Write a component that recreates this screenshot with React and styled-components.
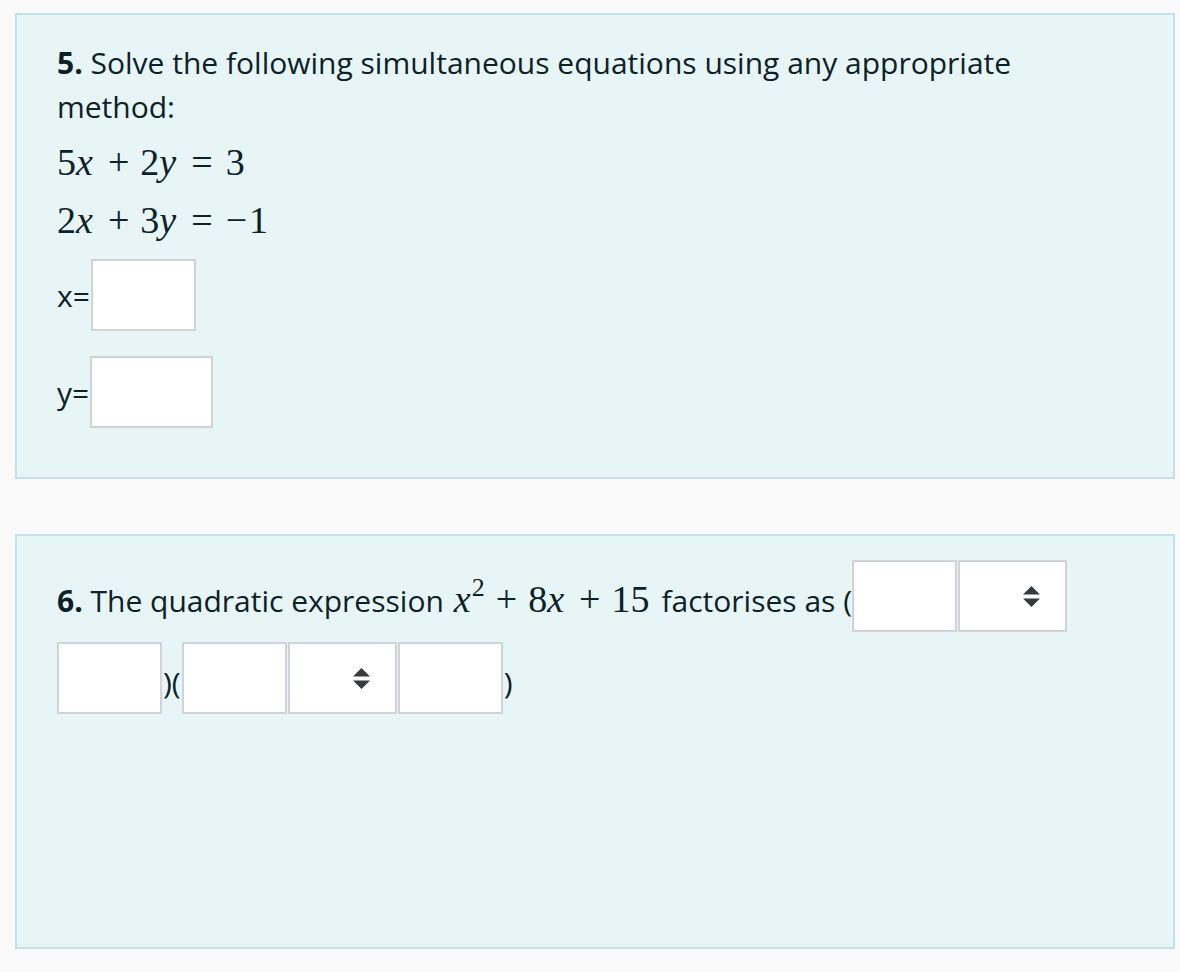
import React from "react";
import styled, { createGlobalStyle } from "styled-components";

const GlobalStyle = createGlobalStyle`
  html, body {
    margin: 0;
    padding: 0;
    background: #fafafa;
  }
  body {
    font-family: "Open Sans", "Liberation Sans", sans-serif;
    color: #0c2226;
  }
`;

const Page = styled.div`
  padding: 13px 5px 20px 15px;
  display: flex;
  flex-direction: column;
  gap: 55px;
`;

const Card = styled.div`
  box-sizing: border-box;
  height: ${(p) => p.$height}px;
  background: #e7f5f7;
  border: 2px solid #bee3eb;
  padding: ${(p) => p.$padTop}px 60px 0 40px;
`;

const QuestionText = styled.p`
  margin: 0;
  font-size: 30px;
  line-height: 44px;
`;

const Num = styled.b`
  font-weight: 700;
`;

const Equations = styled.div`
  margin-top: 4px;
  display: flex;
  flex-direction: column;
`;

const EqLine = styled.div`
  font-family: "Liberation Serif", "Times New Roman", serif;
  font-size: 38px;
  line-height: 58px;
  white-space: nowrap;
`;

const V = styled.i`
  font-style: italic;
  margin-right: ${(p) => p.$r || 2}px;
`;

const Op = styled.span`
  margin: 0 ${(p) => p.$gap || 11}px;
`;

const Minus = styled.span`
  margin-right: 2px;
`;

const Answers = styled.div`
  margin-top: 10px;
  display: flex;
  flex-direction: column;
  gap: 25px;
`;

const AnswerRow = styled.label`
  display: flex;
  align-items: center;
  font-size: 30px;
`;

const Label = styled.span`
  margin-top: 1px;
  margin-right: 1px;
`;

const Input = styled.input`
  box-sizing: border-box;
  width: ${(p) => p.$w || 105}px;
  height: 72px;
  border: 2px solid #ced4da;
  background: #fff;
  border-radius: 0;
  margin: 0;
  padding: 0 10px;
  font-size: 28px;
  outline: none;
`;

const SelectBox = styled.div`
  box-sizing: border-box;
  width: 109px;
  height: 72px;
  border: 2px solid #ced4da;
  background: #fff;
  display: flex;
  align-items: center;
  justify-content: flex-end;
  padding-right: 25px;
`;

const Line = styled.div`
  display: flex;
  align-items: center;
  font-size: 30px;
  white-space: nowrap;
  margin-bottom: ${(p) => p.$mb || 0}px;
`;

const TextPart = styled.span`
  margin-top: 8px;
`;

const MathInline = styled.span`
  font-family: "Liberation Serif", "Times New Roman", serif;
  font-size: 38px;
  margin: 6px 12px 0 10px;
`;

const Sup = styled.sup`
  font-size: 26px;
  vertical-align: 0;
  position: relative;
  top: -16px;
  margin-left: -1px;
`;

const Paren = styled.span`
  margin: 8px 1px 0;
`;

const Gap = styled.span`
  width: ${(p) => p.$w}px;
`;

const Arrows = () => (
  <svg width="17" height="21" viewBox="0 0 17 21">
    <path d="M8.5 0 L17 8.5 L0 8.5 Z" fill="#343a40" />
    <path d="M0 12.5 L17 12.5 L8.5 21 Z" fill="#343a40" />
  </svg>
);

const Select = () => (
  <SelectBox>
    <Arrows />
  </SelectBox>
);

export default function App() {
  return (
    <>
      <GlobalStyle />
      <Page>
        <Card $height={466} $padTop={26}>
          <QuestionText>
            <Num>5.</Num> Solve the following simultaneous equations using any appropriate method:
          </QuestionText>
          <Equations>
            <EqLine>
              5<V $r={4}>x</V>
              <Op>+</Op>2<V>y</V>
              <Op $gap={13}>=</Op>3
            </EqLine>
            <EqLine>
              2<V $r={4}>x</V>
              <Op>+</Op>3<V>y</V>
              <Op $gap={13}>=</Op>
              <Minus>−</Minus>1
            </EqLine>
          </Equations>
          <Answers>
            <AnswerRow>
              <Label>x=</Label>
              <Input $w={105} />
            </AnswerRow>
            <AnswerRow>
              <Label>y=</Label>
              <Input $w={123} />
            </AnswerRow>
          </Answers>
        </Card>
        <Card $height={415} $padTop={24}>
          <Line $mb={10}>
            <TextPart>
              <Num>6.</Num> The quadratic expression
            </TextPart>
            <MathInline>
              <V>x</V>
              <Sup>2</Sup>
              <Op>+</Op>8<V $r={4}>x</V>
              <Op>+</Op>15
            </MathInline>
            <TextPart>factorises as (</TextPart>
            <Input $w={105} />
            <Gap $w={1} />
            <Select />
          </Line>
          <Line>
            <Input $w={105} />
            <Paren>)(</Paren>
            <Input $w={105} />
            <Gap $w={1} />
            <Select />
            <Gap $w={1} />
            <Input $w={105} />
            <Paren>)</Paren>
          </Line>
        </Card>
      </Page>
    </>
  );
}
